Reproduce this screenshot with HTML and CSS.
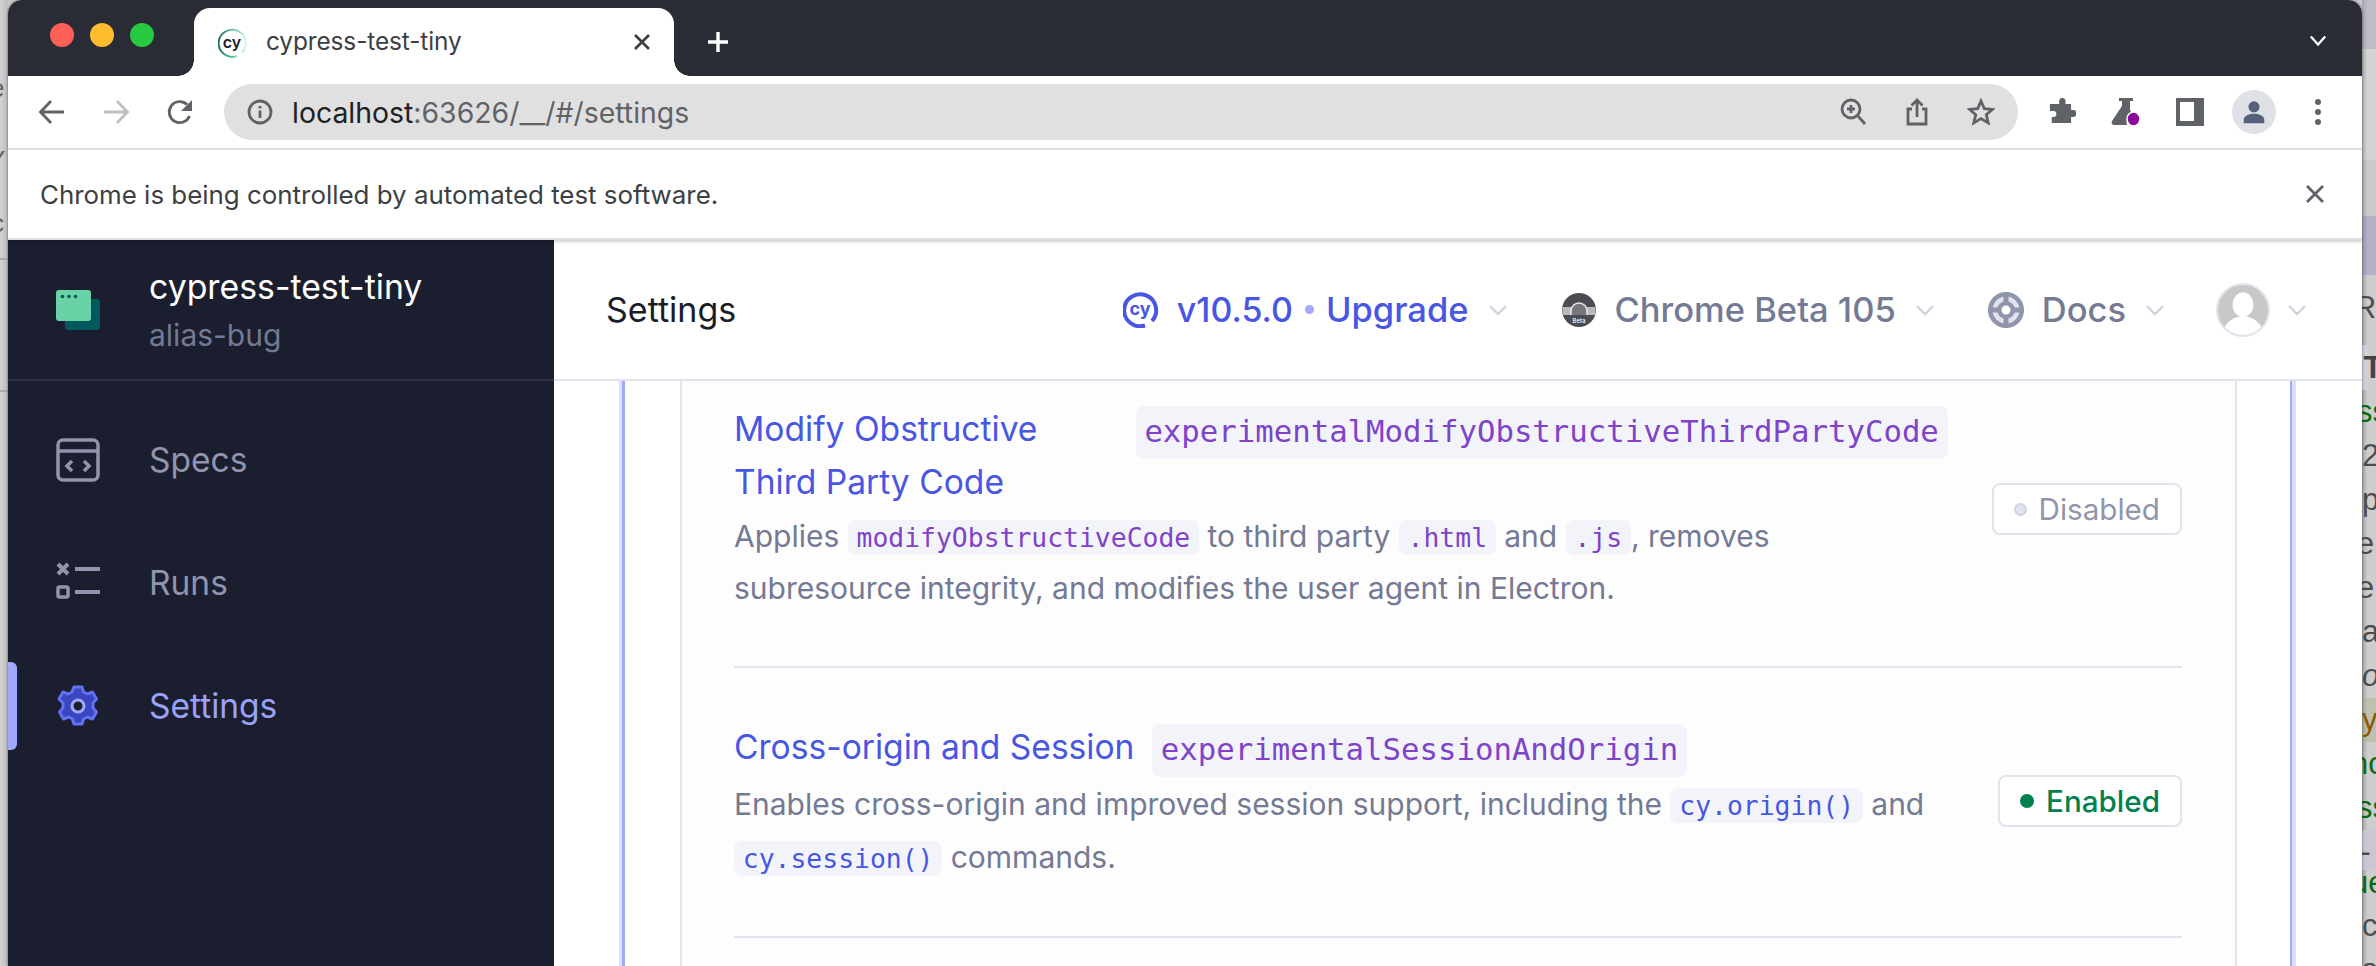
FILE: index.html
```html
<!DOCTYPE html>
<html lang="en">
<head>
<meta charset="utf-8">
<title>cypress-test-tiny</title>
<link rel="stylesheet" href="styles.css">
</head>
<body>
<div class="desk desk-left" aria-hidden="true">
  <span class="frag frag-e">e</span><span class="frag frag-y">Y</span><span class="frag frag-c">c</span>
  <i class="rule rule-a"></i><i class="rule rule-b"></i>
</div>
<div class="window">
  <div class="tabbar">
    <div class="lights"><i class="light red"></i><i class="light amber"></i><i class="light green"></i></div>
    <div class="tab">
      <svg class="favicon" viewBox="0 0 32 32"><defs><linearGradient id="fav" x1="0" y1="0" x2="1" y2="0"><stop offset="0" stop-color="#1b6f62"/><stop offset=".6" stop-color="#69d3a7"/><stop offset="1" stop-color="#d6f5e6"/></linearGradient></defs><path d="M20 30A14.5 14.5 0 1 1 26 26" fill="none" stroke="url(#fav)" stroke-width="2"/><text x="5" y="21" class="fav-text">cy</text></svg>
      <span class="tab-title">cypress-test-tiny</span>
      <svg class="tab-x" viewBox="0 0 20 20"><path d="M3 3l14 14M17 3L3 17"/></svg>
    </div>
    <svg class="newtab" viewBox="0 0 24 24"><path d="M12 2v20M2 12h20"/></svg>
    <svg class="tabmenu" viewBox="0 0 20 14"><path d="M2 2l8 9 8-9"/></svg>
  </div>
  <div class="toolbar">
    <div class="nav-btn"><svg class="ico" viewBox="0 0 28 28"><path d="M26 14H3M13 3L2.5 14 13 25"/></svg></div>
    <div class="nav-btn"><svg class="ico ico-off" viewBox="0 0 28 28"><path d="M2 14h23M15 3l10.5 11L15 25"/></svg></div>
    <div class="nav-btn"><svg class="ico" viewBox="0 0 28 28"><path d="M23.5 18A10.5 10.5 0 1 1 21 6.5"/><path class="fill" d="M26 2v11H15z"/></svg></div>
    <div class="omnibox">
      <svg class="info" viewBox="0 0 26 26"><circle cx="13" cy="13" r="11"/><path d="M13 11.5v7.5M13 7v2.5"/></svg>
      <span class="url"><b>localhost</b>:63626/__/#/settings</span>
      <div class="omni-actions">
        <div class="nav-btn"><svg class="ico" viewBox="0 0 28 28"><circle cx="12" cy="11" r="9"/><path d="M18.5 17.5L26 26M12 7v8M8 11h8"/></svg></div>
        <div class="nav-btn"><svg class="ico" viewBox="0 0 28 28"><path d="M9 11H5v15h18V11h-4M14 19V2M8.5 7.5L14 2l5.5 5.5"/></svg></div>
        <div class="nav-btn"><svg class="ico" viewBox="0 0 28 28"><path d="M14 3l3.3 7.6 8.2.8-6.2 5.4 1.9 8.1L14 20.6l-7.2 4.3 1.9-8.1-6.2-5.4 8.2-.8z"/></svg></div>
      </div>
    </div>
    <div class="tools">
      <div class="nav-btn"><svg class="ico ico-solid" viewBox="0 0 28 28"><path d="M11 4.500a3.500 3.500 0 0 1 7 0V7h6v6h2.500a3.500 3.500 0 0 1 0 7H24v6H3v-6h2a3 3 0 0 0 0-6H1V7h10z" transform="translate(1 -1) scale(.92 1)"/></svg></div>
      <div class="nav-btn flask"><svg class="ico-flask" viewBox="0 0 30 30"><path class="flask-body" d="M8 1h14v3h-3v9l4 7h-4a7 7 0 0 0-3 8H4c-3 0-4-2-3-4l10-15V4H8z"/><ellipse class="flask-dot" cx="22.500" cy="22" rx="6.500" ry="7"/></svg></div>
      <div class="nav-btn"><svg class="ico-panel" viewBox="0 0 28 28"><path fill-rule="evenodd" d="M0 0h28v28H0zM4 4v19h14V4z"/></svg></div>
      <div class="nav-btn"><div class="profile"><svg class="profile-ico" viewBox="0 0 24 28"><circle cx="12" cy="8" r="6.500"/><path d="M0 27v-4c0-5 7-7 12-7s12 2 12 7v4z"/></svg></div></div>
      <div class="nav-btn"><svg class="dots" viewBox="0 0 8 28"><circle cx="4" cy="4" r="3"/><circle cx="4" cy="14" r="3"/><circle cx="4" cy="24" r="3"/></svg></div>
    </div>
  </div>
  <div class="infobar">
    <span class="info-text">Chrome is being controlled by automated test software.</span>
    <svg class="info-x" viewBox="0 0 20 20"><path d="M2 2l16 16M18 2L2 18"/></svg>
  </div>
  <div class="app">
    <aside class="sidebar">
      <div class="brand">
        <svg class="brand-ico" viewBox="0 0 44 40"><rect x="9" y="9" width="35" height="31" rx="3" fill="#00595d"/><rect width="35" height="31" rx="3" fill="#69d3a7"/><circle cx="6.500" cy="6.500" r="1.800" fill="#00595d"/><circle cx="13" cy="6.500" r="1.800" fill="#00595d"/><circle cx="19.500" cy="6.500" r="1.800" fill="#00595d"/></svg>
        <div class="brand-text"><div class="brand-name">cypress-test-tiny</div><div class="brand-branch">alias-bug</div></div>
      </div>
      <nav class="side-nav">
        <a class="side-item">
          <svg class="side-ico" viewBox="0 0 44 44"><rect x="2" y="2" width="40" height="40" rx="5" fill="none" stroke="#9095ad" stroke-width="3.500"/><path d="M2 13h40" stroke="#9095ad" stroke-width="3.500"/><path d="M16 23l-5 5 5 5M28 23l5 5-5 5" fill="none" stroke="#9095ad" stroke-width="3.500"/></svg>
          <span>Specs</span>
        </a>
        <a class="side-item">
          <svg class="side-ico" viewBox="0 0 44 44"><path d="M2 3l10 10M12 3L2 13" stroke="#9095ad" stroke-width="4"/><rect x="2" y="26" width="10" height="10" rx="1.500" fill="none" stroke="#9095ad" stroke-width="3.500"/><path d="M19 8h25M19 31h25" stroke="#9095ad" stroke-width="4"/></svg>
          <span>Runs</span>
        </a>
        <a class="side-item is-active">
          <svg class="side-ico" viewBox="0 0 44 44"><path d="M18 3h8l1.500 5 4 2 5-2 4 7-3.500 4v5l3.500 4-4 7-5-2-4 2-1.500 5h-8l-1.500-5-4-2-5 2-4-7 3.500-4v-5L3 15l4-7 5 2 4-2z" fill="#3a46bd" stroke="#6470f3" stroke-width="3" stroke-linejoin="round"/><circle cx="22" cy="22" r="6" fill="#1b1e2e" stroke="#a0a8ff" stroke-width="3"/></svg>
          <span>Settings</span>
        </a>
      </nav>
    </aside>
    <div class="page">
      <header class="topbar">
        <h1 class="page-title">Settings</h1>
        <div class="top-items">
          <div class="top-item version">
            <svg class="top-ico" viewBox="0 0 36 36"><path d="M22 33.500A16 16 0 1 1 29 29" fill="none" stroke="#4956e3" stroke-width="4"/><text x="6.500" y="23" class="cy-text">cy</text></svg>
            <span class="ver">v10.5.0</span><i class="sep"></i><span class="ver">Upgrade</span>
            <svg class="chev" viewBox="0 0 20 12"><path d="M2 2l8 8 8-8"/></svg>
          </div>
          <div class="top-item browser">
            <svg class="top-ico-b" viewBox="0 0 34 34"><circle cx="17" cy="17" r="17" fill="#4b4d52"/><path d="M0.500 14h33v8H0.500z" fill="#b8b9bb"/><path d="M9 22v-4a8 8 0 0 1 16 0v4" fill="#77787c" stroke="#e8e8e8" stroke-width="1.500"/><text x="17" y="30" class="beta-text">Beta</text></svg>
            <span>Chrome Beta 105</span>
            <svg class="chev" viewBox="0 0 20 12"><path d="M2 2l8 8 8-8"/></svg>
          </div>
          <div class="top-item docs">
            <svg class="top-ico" viewBox="0 0 36 36"><circle cx="18" cy="18" r="18" fill="#9095ad"/><circle cx="18" cy="18" r="13.500" fill="#e1e3ed"/><circle cx="18" cy="18" r="9" fill="#9095ad"/><circle cx="18" cy="18" r="4.500" fill="#fff"/><path d="M18 0v10M18 26v10M0 18h10M26 18h10" stroke="#9095ad" stroke-width="5"/></svg>
            <span>Docs</span>
            <svg class="chev" viewBox="0 0 20 12"><path d="M2 2l8 8 8-8"/></svg>
          </div>
          <div class="top-item user">
            <svg class="top-avatar" viewBox="0 0 52 52"><defs><clipPath id="av"><circle cx="26" cy="26" r="25"/></clipPath></defs><g clip-path="url(#av)"><rect width="52" height="52" fill="#c8c8c8"/><ellipse cx="26" cy="21" rx="10" ry="12" fill="#fff"/><path d="M6 52c0-14 12-20 20-20s20 6 20 20z" fill="#fff"/></g><circle cx="26" cy="26" r="25" fill="none" stroke="#e1e3ed" stroke-width="2"/></svg>
            <svg class="chev" viewBox="0 0 20 12"><path d="M2 2l8 8 8-8"/></svg>
          </div>
        </div>
      </header>
      <main class="main">
        <div class="outer">
          <div class="inner">
            <section class="row row-first">
              <div class="row-body">
                <div class="row-head">
                  <h3 class="row-title title-wrap">Modify Obstructive Third Party Code</h3>
                  <code class="key">experimentalModifyObstructiveThirdPartyCode</code>
                </div>
                <p class="row-desc">Applies <code class="inline">modifyObstructiveCode</code> to third party <code class="inline">.html</code> and <code class="inline">.js</code>, removes<br>subresource integrity, and modifies the user agent in Electron.</p>
              </div>
              <div class="badge"><i class="dot dot-off"></i>Disabled</div>
            </section>
            <section class="row row-second">
              <div class="row-body">
                <div class="row-head">
                  <h3 class="row-title">Cross-origin and Session</h3>
                  <code class="key">experimentalSessionAndOrigin</code>
                </div>
                <p class="row-desc">Enables cross-origin and improved session support, including the <code class="inline cmd">cy.origin()</code> and<br><code class="inline cmd">cy.session()</code> commands.</p>
              </div>
              <div class="badge is-on"><i class="dot dot-on"></i>Enabled</div>
            </section>
          </div>
        </div>
      </main>
    </div>
  </div>
</div>
<div class="desk desk-right" aria-hidden="true">
  <div class="band b1"></div><div class="band b2"></div><div class="band b3"></div>
  <div class="band b4"></div>
  <div class="band b5 line">R</div>
  <div class="band b6 line strong">IT</div>
  <div class="line g cut">ss</div>
  <div class="line">2</div>
  <div class="line">p</div>
  <div class="line cut">e:</div>
  <div class="line cut">e:</div>
  <div class="line">a</div>
  <div class="line ital">o</div>
  <div class="line y">y</div>
  <div class="line g cut2">nc</div>
  <div class="line g cut">ss</div>
  <div class="line dash">:-</div>
  <div class="line g cut3">ue</div>
  <div class="line">c</div>
  <div class="line">s</div>
</div>
</body>
</html>
```
FILE: styles.css
```css
* { box-sizing: border-box; }
html, body { margin: 0; height: 966px; overflow: hidden; }
body { display: flex; width: 2376px; background: #c9c9c9; font-family: Inter, "Liberation Sans", sans-serif; }

/* desktop slivers beside the window */
.desk { position: relative; overflow: hidden; flex: none; color: #555; font-family: "Liberation Sans", sans-serif; }
.desk-left { width: 8px; background: linear-gradient(90deg, #d2d2d2, #bdbdbd); }
.frag { position: absolute; left: -10px; font-size: 26px; line-height: 30px; color: #666; }
.frag-e { top: 73px; }
.frag-y { top: 145px; left: -12px; }
.frag-c { top: 208px; left: -9px; }
.rule { position: absolute; left: 0; right: 0; height: 2px; background: #a9a9a9; }
.rule-a { top: 258px; }
.rule-b { top: 390px; }

.desk-right { width: 14px; background: linear-gradient(90deg, #a8a8a8, #cdcdcd 40%); font-size: 30.800px; }
.band { width: 100%; }
.b1 { height: 49px; background: linear-gradient(90deg, #a9a5b3, #c0bdc8 40%); }
.b2 { height: 111px; background: linear-gradient(90deg, #b0b0b0, #d4d4d4 40%); }
.b3 { height: 56px; background: linear-gradient(90deg, #a8a8a8, #cbcbcb 40%); }
.b4 { height: 59px; background: linear-gradient(90deg, #9c98ac, #b6b0c6 40%); }
.line { height: 44px; line-height: 44px; white-space: nowrap; color: #4d4d4d; }
.line.b5 { height: 70px; line-height: 66px; margin-left: -8px; }
.line.strong { height: 45px; line-height: 45px; margin-left: -7px; font-weight: 700; color: #444; background: linear-gradient(90deg, #b5b1bb, #d3ced8 40%); }
.g { color: #0a6a0a; }
.cut { margin-left: -5px; }
.cut2 { margin-left: -11px; }
.line.cut3 { margin-left: -11px; height: 34px; line-height: 26px; }
.ital { font-style: italic; }
.y { color: #8a5a00; background: linear-gradient(90deg, #a9a99a, #c0c0ae 40%); }
.line.dash { height: 40px; margin-left: -10px; background: linear-gradient(90deg, #aaa6b3, #cbc6d2 40%); }

/* browser window */
.window { width: 2354px; flex: none; display: flex; flex-direction: column; background: #fff; border-radius: 14px 14px 0 0; overflow: hidden; box-shadow: 0 0 3px rgba(0,0,0,.5); position: relative; z-index: 1; }
.tabbar { height: 76px; flex: none; display: flex; align-items: flex-end; background: #292c35; padding-left: 42px; }
.lights { display: flex; gap: 16px; align-self: flex-start; margin-top: 23px; width: 144px; }
.light { width: 24px; height: 24px; border-radius: 50%; }
.red { background: #fe5f57; }
.amber { background: #febc2e; }
.green { background: #28c840; }

.tab { position: relative; width: 480px; height: 68px; display: flex; align-items: center; background: #fff; border-radius: 16px 16px 0 0; padding-left: 24px; }
.tab::before, .tab::after { content: ""; position: absolute; bottom: 0; width: 16px; height: 16px; }
.tab::before { left: -16px; background: radial-gradient(circle at 0 0, #292c35 15.500px, #fff 16px); }
.tab::after { right: -16px; background: radial-gradient(circle at 100% 0, #292c35 15.500px, #fff 16px); }
.favicon { width: 30px; height: 30px; flex: none; margin-top: 1px; }
.fav-text { font: 600 17px Inter, sans-serif; fill: #1b1e2e; }
.tab-title { margin-left: 18px; font-size: 24.400px; letter-spacing: -.1px; color: #3c4043; margin-top: -2px; }
.tab-x { position: absolute; left: 438px; top: 24px; width: 20px; height: 20px; fill: none; stroke: #3c4043; stroke-width: 2.800; }
.newtab { width: 24px; height: 24px; margin: 0 0 22px 32px; fill: none; stroke: #fff; stroke-width: 3.400; }
.tabmenu { width: 18px; height: 14px; margin: 0 35px 28px auto; fill: none; stroke: #fff; stroke-width: 2.600; }

.toolbar { height: 72px; flex: none; display: flex; align-items: center; padding-left: 12px; }
.nav-btn { width: 64px; height: 56px; flex: none; display: flex; align-items: center; justify-content: center; }
.ico { width: 28px; height: 28px; fill: none; stroke: #5f6368; stroke-width: 2.800; }
.ico .fill { fill: #5f6368; stroke: none; }
.ico-off { stroke: #bdc1c6; }
.ico-solid { fill: #5f6368; stroke: none; }
.omnibox { width: 1794px; height: 56px; margin-left: 12px; flex: none; display: flex; align-items: center; padding: 0 5px 0 23px; background: #e0e0e0; border-radius: 28px; }
.info { width: 26px; height: 26px; flex: none; fill: none; stroke: #5f6368; stroke-width: 2.800; }
.url { margin-left: 19px; font-size: 28.400px; color: #5f6368; }
.url b { font-weight: 400; color: #202124; }
.omni-actions { display: flex; margin-left: auto; }
.tools { display: flex; align-items: center; margin-left: 12px; }
.ico-flask { width: 30px; height: 30px; }
.flask-body { fill: #5f6368; }
.flask-dot { fill: #8a0a9c; stroke: #fff; stroke-width: 1.500; }
.ico-panel { width: 28px; height: 28px; fill: #5f6368; }
.profile { width: 44px; height: 44px; border-radius: 50%; background: #dee1e6; display: flex; align-items: center; justify-content: center; }
.profile-ico { width: 24px; height: 24px; fill: #56607a; }
.dots { width: 8px; height: 28px; fill: #5f6368; }

.infobar { height: 92px; flex: none; display: flex; align-items: center; justify-content: space-between; border-top: 2px solid #dedfe0; border-bottom: 2px solid #dedfe0; padding: 0 37px 0 32px; box-shadow: 0 2px 3px rgba(0,0,0,.18); position: relative; z-index: 2; background: #fff; }
.info-text { font-size: 25.900px; color: #3c4043; }
.info-x { width: 20px; height: 20px; fill: none; stroke: #5f6368; stroke-width: 2.800; }

/* cypress app */
.app { flex: 1; min-height: 0; display: flex; }
.sidebar { width: 546px; flex: none; background: #1b1e2e; display: flex; flex-direction: column; }
.brand { height: 141px; flex: none; display: flex; align-items: center; padding: 2px 0 0 48px; border-bottom: 2px solid #2e3247; }
.brand-ico { width: 44px; height: 40px; flex: none; margin-top: -1px; }
.brand-text { margin-left: 49px; }
.brand-name { font-size: 33.800px; line-height: 49px; color: #fff; }
.brand-branch { font-size: 30px; line-height: 49px; color: #747994; }
.side-nav { padding-top: 17px; display: flex; flex-direction: column; }
.side-item { height: 123.200px; display: flex; align-items: center; padding-left: 48px; position: relative; font-size: 33.500px; color: #9095ad; }
.side-item span { margin-left: 49px; }
.side-ico { width: 44px; height: 44px; flex: none; }
.is-active { color: #9aa2fc; }
.is-active::before { content: ""; position: absolute; left: 0; top: 17.600px; width: 9px; height: 88px; border-radius: 0 6px 6px 0; background: #a0a8ff; }

.page { flex: 1; min-width: 0; display: flex; flex-direction: column; }
.topbar { height: 141px; flex: none; display: flex; align-items: center; justify-content: space-between; padding-left: 52px; border-bottom: 2px solid #e1e3ed; background: #fff; }
.page-title { margin: 0; font-size: 34px; font-weight: 400; color: #191c2a; }
.top-items { display: flex; align-items: center; font-size: 34.500px; font-weight: 500; color: #747994; padding-right: 55px; }
.top-item { display: flex; align-items: center; }
.top-ico { width: 36px; height: 36px; flex: none; margin-right: 18px; }
.top-ico-b { width: 34px; height: 34px; flex: none; margin-right: 19px; }
.top-avatar { width: 54px; height: 54px; flex: none; margin-right: -2px; }
.cy-text { font: 700 18px Inter, sans-serif; fill: #4956e3; }
.beta-text { font: 500 6px Inter, sans-serif; fill: #fff; text-anchor: middle; }
.version { color: #4956e3; }
.ver:first-of-type { font-size: 34px; }
.sep { width: 9px; height: 9px; margin: 0 12px; border-radius: 50%; background: #a0a8ff; }
.chev { width: 20px; height: 12px; margin-left: 19px; fill: none; stroke: #d0d2e0; stroke-width: 2.400; }
.browser { margin-left: 54px; }
.docs { margin-left: 53px; }
.user { margin-left: 51px; }

.main { flex: 1; min-height: 0; overflow: hidden; background: #fff; padding: 0 70px 0 68px; }
.outer { height: 100%; border-left: 3px solid #a0a8ff; border-right: 2px solid #a0a8ff; box-shadow: -3px 0 0 #dcdefc, 4px 0 0 #dcdefc; padding: 0 53px 0 55px; }
.inner { height: 100%; background: #fdfdfe; border-left: 2px solid #e1e3ed; border-right: 2px solid #e1e3ed; padding: 0 53px 0 52px; }
.row { display: flex; align-items: center; justify-content: space-between; padding: 52.800px 0; border-bottom: 2px solid #e1e3ed; }
.row-first { padding: 22px 0 51px; }
.row-first .row-head { margin-bottom: 1px; }
.row-second .row-head { margin-bottom: 1px; }
.row-head { display: flex; align-items: flex-start; gap: 17.600px; }
.row-title { margin: 0; font-size: 33.600px; line-height: 52.800px; font-weight: 400; color: #4956e3; white-space: nowrap; }
.title-wrap { width: 384px; white-space: normal; }
.key { height: 52.800px; margin-top: 3px; padding: 0 8.800px; border-radius: 8px; background: #f3f4fa; font-family: "DejaVu Sans Mono", "Liberation Mono", monospace; font-size: 30.700px; line-height: 52.800px; color: #7f43c9; white-space: nowrap; }
.row-desc { margin: 0; font-size: 30px; line-height: 52.800px; color: #747994; white-space: nowrap; }
.inline { display: inline-block; height: 35px; padding: 0 8.800px; border-radius: 8px; background: #f3f4fa; font-family: "DejaVu Sans Mono", "Liberation Mono", monospace; font-size: 26.400px; line-height: 35px; color: #7f43c9; vertical-align: baseline; }
.cmd { color: #4956e3; }
.badge { height: 52px; flex: none; display: flex; align-items: center; padding: 0 20px; border: 2px solid #e1e3ed; border-radius: 8px; background: #fff; font-size: 29.600px; color: #9095ad; }
.is-on { margin-bottom: 3px; color: #00814d; font-weight: 500; }
.dot { border-radius: 50%; margin-right: 12px; }
.dot-off { width: 13px; height: 13px; background: #e1e3ed; border: 2px solid #d0d2e0; }
.dot-on { width: 14px; height: 14px; background: #00814d; }
```
